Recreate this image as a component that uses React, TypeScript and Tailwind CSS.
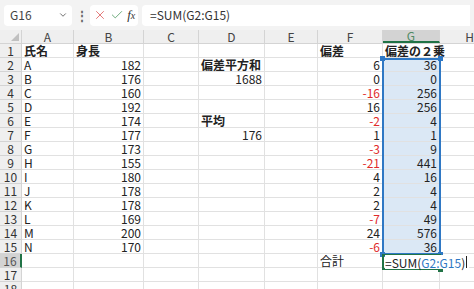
import { ChevronDown, X, Check } from 'lucide-react';

type Cell = { v: string; bold?: boolean; right?: boolean; red?: boolean };

const colWidths = [52, 70, 55, 66, 53, 65, 57, 60];
const colNames = ['A', 'B', 'C', 'D', 'E', 'F', 'G', 'H'];

const names = ['A', 'B', 'C', 'D', 'E', 'F', 'G', 'H', 'I', 'J', 'K', 'L', 'M', 'N'];
const heights = ['182', '176', '160', '192', '174', '177', '173', '155', '180', '178', '178', '169', '200', '170'];
const devs = ['6', '0', '-16', '16', '-2', '1', '-3', '-21', '4', '2', '2', '-7', '24', '-6'];
const squares = ['36', '0', '256', '256', '4', '1', '9', '441', '16', '4', '4', '49', '576', '36'];

function buildRows(): Record<number, Cell>[] {
  const rows: Record<number, Cell>[] = [];
  rows.push({
    0: { v: '氏名', bold: true },
    1: { v: '身長', bold: true },
    5: { v: '偏差', bold: true },
    6: { v: '偏差の２乗', bold: true },
  });
  for (let i = 0; i < 14; i++) {
    const r: Record<number, Cell> = {
      0: { v: names[i] },
      1: { v: heights[i], right: true },
      5: { v: devs[i], right: true, red: devs[i].startsWith('-') },
      6: { v: squares[i], right: true },
    };
    if (i === 0) r[3] = { v: '偏差平方和', bold: true };
    if (i === 1) r[3] = { v: '1688', right: true };
    if (i === 4) r[3] = { v: '平均', bold: true };
    if (i === 5) r[3] = { v: '176', right: true };
    rows.push(r);
  }
  rows.push({ 5: { v: '合計' } });
  rows.push({});
  rows.push({});
  return rows;
}

const font = { fontFamily: '"Noto Sans CJK JP", "Noto Sans", sans-serif' };

function Corner({ className }: { className: string }) {
  return <div className={`absolute w-[5px] h-[5px] ${className}`} />;
}

export default function App() {
  const rows = buildRows();

  return (
    <div className="w-[474px] h-[289px] overflow-hidden bg-white text-[12px] text-[#222]" style={font}>
      {/* Formula bar */}
      <div className="h-[30px] bg-[#f3f3f3] flex items-center gap-[4px] px-[4px]">
        <div className="w-[68px] h-[21px] bg-white rounded-[4px] flex items-center justify-between pl-[6px] pr-[4px] text-[#444]">
          <span>G16</span>
          <ChevronDown className="w-[10px] h-[10px] text-[#555]" strokeWidth={2} />
        </div>
        <span className="text-[#666] text-[12px] font-bold w-[10px] text-center">⋮</span>
        <div className="w-[48px] h-[21px] bg-white rounded-[4px] flex items-center justify-around px-[1px]">
          <X className="w-[14px] h-[14px] text-[#e06767]" strokeWidth={1.5} />
          <Check className="w-[14px] h-[14px] text-[#5aa06a]" strokeWidth={1.5} />
          <span className="italic text-[13px] text-[#333]" style={{ fontFamily: '"Liberation Serif", serif' }}>
            f<span className="text-[10px]">x</span>
          </span>
        </div>
        <div className="flex-1 h-[21px] bg-white rounded-l-[4px] flex items-center pl-[8px] text-[#333]">
          =SUM(G2:G15)
        </div>
      </div>

      {/* Grid */}
      <div className="relative">
        {/* Column headers */}
        <div className="flex h-[14px] bg-[#efefef] border-b border-[#d4d4d4]">
          <div className="w-[22px] shrink-0 relative border-r border-[#d4d4d4]">
            <div className="absolute right-[2px] bottom-[2px] w-0 h-0 border-l-[8px] border-l-transparent border-b-[8px] border-b-[#c0c0c0]" />
          </div>
          {colNames.map((c, i) => (
            <div
              key={c}
              className={`shrink-0 flex items-center justify-center leading-[13px] border-r border-[#d4d4d4] ${
                c === 'G' ? 'bg-[#d3d3d3] text-[#4f8a64] border-b-2 border-b-[#217346]' : 'text-[#444]'
              }`}
              style={{ width: colWidths[i] }}
            >
              {c}
            </div>
          ))}
        </div>

        {rows.map((r, ri) => {
          const rn = ri + 1;
          return (
            <div key={rn} className="flex h-[14px]">
              <div
                className={`w-[22px] shrink-0 flex items-center justify-center leading-[13px] border-b border-[#d4d4d4] ${
                  rn === 16
                    ? 'bg-[#d3d3d3] text-[#555] border-r-2 border-r-[#217346]'
                    : 'bg-[#efefef] text-[#333] border-r border-r-[#d4d4d4]'
                }`}
              >
                {rn}
              </div>
              {colNames.map((c, ci) => {
                const cell = r[ci];
                const sel = ci === 6 && rn >= 2 && rn <= 15;
                return (
                  <div
                    key={c}
                    className={`shrink-0 flex items-center leading-[13px] whitespace-nowrap px-[2px] border-b border-r border-[#e1e1e1] ${
                      sel ? 'bg-[#dbe8f5]' : ''
                    } ${cell?.right ? 'justify-end' : 'justify-start'} ${cell?.bold ? 'font-bold' : ''} ${
                      cell?.red ? 'text-[#e02a2a]' : ''
                    }`}
                    style={{ width: colWidths[ci] }}
                  >
                    {cell?.v}
                  </div>
                );
              })}
            </div>
          );
        })}

        {/* Selection G2:G15 */}
        <div className="absolute left-[382px] top-[28px] w-[59px] h-[197px] border-2 border-[#2f78c4] pointer-events-none">
          <Corner className="-left-[4px] -top-[4px] bg-[#2f78c4]" />
          <Corner className="-right-[4px] -top-[4px] bg-[#2f78c4]" />
          <Corner className="-left-[4px] -bottom-[4px] bg-[#2f78c4]" />
          <Corner className="-right-[4px] -bottom-[4px] bg-[#2f78c4]" />
        </div>

        {/* Editing cell G16 */}
        <div className="absolute left-[382px] top-[224px] w-[59px] h-[16px] border-2 border-[#217346] pointer-events-none">
          <Corner className="-right-[4px] -bottom-[4px] bg-[#217346]" />
        </div>
        <div className="absolute left-[385px] top-[225px] h-[14px] bg-white flex items-center leading-[13px] whitespace-nowrap pr-[2px]">
          <span>=SUM(</span>
          <span className="text-[#2f78c4]">G2:G15</span>
          <span>)</span>
          <span className="w-px h-[12px] bg-[#222] ml-[1px]" />
        </div>
      </div>
    </div>
  );
}
